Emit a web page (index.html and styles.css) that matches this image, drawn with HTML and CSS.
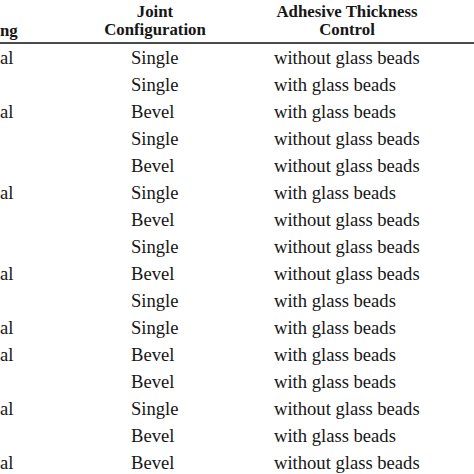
FILE: index.html
```html
<!DOCTYPE html>
<html>
<head>
<meta charset="utf-8">
<link rel="stylesheet" href="styles.css">
</head>
<body>
<div class="table">
  <div class="head">
    <div class="h c1"><span class="l2">ng</span></div>
    <div class="h c2">Joint<br>Configuration</div>
    <div class="h c3">Adhesive Thickness<br>Control</div>
  </div>
  <div class="rows">
    <div class="c1">al</div><div class="c2">Single</div><div class="c3">without glass beads</div>
    <div class="c1"></div><div class="c2">Single</div><div class="c3">with glass beads</div>
    <div class="c1">al</div><div class="c2">Bevel</div><div class="c3">with glass beads</div>
    <div class="c1"></div><div class="c2">Single</div><div class="c3">without glass beads</div>
    <div class="c1"></div><div class="c2">Bevel</div><div class="c3">without glass beads</div>
    <div class="c1">al</div><div class="c2">Single</div><div class="c3">with glass beads</div>
    <div class="c1"></div><div class="c2">Bevel</div><div class="c3">without glass beads</div>
    <div class="c1"></div><div class="c2">Single</div><div class="c3">without glass beads</div>
    <div class="c1">al</div><div class="c2">Bevel</div><div class="c3">without glass beads</div>
    <div class="c1"></div><div class="c2">Single</div><div class="c3">with glass beads</div>
    <div class="c1">al</div><div class="c2">Single</div><div class="c3">with glass beads</div>
    <div class="c1">al</div><div class="c2">Bevel</div><div class="c3">with glass beads</div>
    <div class="c1"></div><div class="c2">Bevel</div><div class="c3">with glass beads</div>
    <div class="c1">al</div><div class="c2">Single</div><div class="c3">without glass beads</div>
    <div class="c1"></div><div class="c2">Bevel</div><div class="c3">with glass beads</div>
    <div class="c1">al</div><div class="c2">Bevel</div><div class="c3">without glass beads</div>
  </div>
</div>
</body>
</html>
```
FILE: styles.css
```css
html, body {
  margin: 0;
  padding: 0;
  background: #ffffff;
}
body {
  width: 474px;
  height: 474px;
  overflow: hidden;
  font-family: "Liberation Serif", "Times New Roman", serif;
  color: #161616;
}
.table {
  display: flex;
  flex-direction: column;
}
.head {
  display: grid;
  grid-template-columns: 90px 130px 254px;
  padding-top: 3px;
  height: 38.5px;
  border-bottom: 2px solid #4a4a4a;
  font-weight: bold;
  font-size: 16.8px;
  line-height: 18px;
}
.head .h {
  text-align: center;
}
.head .c1 {
  text-align: left;
  display: flex;
  flex-direction: column;
  justify-content: flex-end;
  padding-bottom: 2px;
}
.rows {
  display: grid;
  grid-template-columns: 90px 130px 254px;
  grid-auto-rows: 27px;
  padding-top: 0.5px;
  font-size: 18.6px;
  line-height: 27px;
}
.rows .c1 {
  text-align: left;
}
.rows .c2 {
  padding-left: 41px;
}
.rows .c3 {
  padding-left: 54px;
}
```
